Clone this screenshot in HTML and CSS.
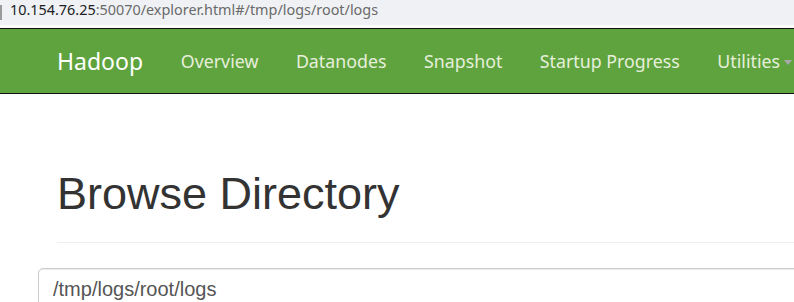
FILE: index.html
```html
<!DOCTYPE html>
<html>
<head>
<meta charset="utf-8">
<link rel="stylesheet" href="styles.css">
</head>
<body>
<div class="addr">
  <span class="addr-bar"></span>
  <span class="addr-text"><span class="host">10.154.76.25</span>:50070/explorer.html#/tmp/logs/root/logs</span>
</div>
<div class="addr-gap"></div>
<nav class="navbar">
  <a class="brand">Hadoop</a>
  <a class="nav-link">Overview</a>
  <a class="nav-link">Datanodes</a>
  <a class="nav-link">Snapshot</a>
  <a class="nav-link">Startup Progress</a>
  <a class="nav-link">Utilities<span class="caret"></span></a>
</nav>
<main class="content">
  <div class="page-header">
    <h1>Browse Directory</h1>
  </div>
  <div class="path-input">/tmp/logs/root/logs</div>
</main>
</body>
</html>
```

FILE: styles.css
```css
html, body {
  margin: 0;
  padding: 0;
  background: #fff;
  overflow: hidden;
  width: 794px;
  height: 302px;
}
.addr {
  height: 25px;
  background: #eff1f4;
  display: flex;
  align-items: flex-start;
}
.addr-bar {
  width: 2px;
  height: 15px;
  margin-top: 5px;
  background: #9a9a9a;
}
.addr-text {
  margin-left: 8px;
  font-family: "Noto Sans", sans-serif;
  font-size: 14.4px;
  line-height: 19px;
  color: #6a6a6a;
  white-space: nowrap;
}
.host {
  color: #202124;
}
.addr-gap {
  height: 3px;
  background: #fff;
}
.navbar {
  height: 64px;
  background: #5fa33e;
  border-top: 1px solid #111;
  border-bottom: 1px solid #111;
  display: flex;
  align-items: center;
  padding-left: 38px;
  white-space: nowrap;
  font-family: "Noto Sans", sans-serif;
}
.brand {
  padding: 0 19px;
  font-size: 23px;
  color: #fff;
  margin-top: -1px;
}
.nav-link {
  padding: 0 18.75px;
  font-size: 17.8px;
  color: #e6efdc;
  display: flex;
  align-items: center;
}
.caret {
  display: inline-block;
  width: 0;
  height: 0;
  margin-left: 4px;
  margin-top: 2px;
  border-top: 5px solid #a9a9a9;
  border-left: 4px solid transparent;
  border-right: 4px solid transparent;
}
.content {
  padding-top: 75px;
}
.page-header {
  margin-left: 57px;
  border-bottom: 1px solid #eee;
  padding-bottom: 23px;
}
h1 {
  margin: 0;
  font-family: "Liberation Sans", Arial, sans-serif;
  font-weight: 400;
  font-size: 45px;
  line-height: 50px;
  color: #333;
}
.path-input {
  margin-top: 25px;
  margin-left: 38px;
  margin-right: -20px;
  height: 42px;
  box-sizing: border-box;
  border: 1px solid #ccc;
  border-radius: 5px;
  box-shadow: inset 0 1px 1px rgba(0,0,0,.075);
  padding: 6px 14px;
  font-family: "Liberation Sans", Arial, sans-serif;
  font-size: 20px;
  line-height: 28px;
  color: #555;
}
```
